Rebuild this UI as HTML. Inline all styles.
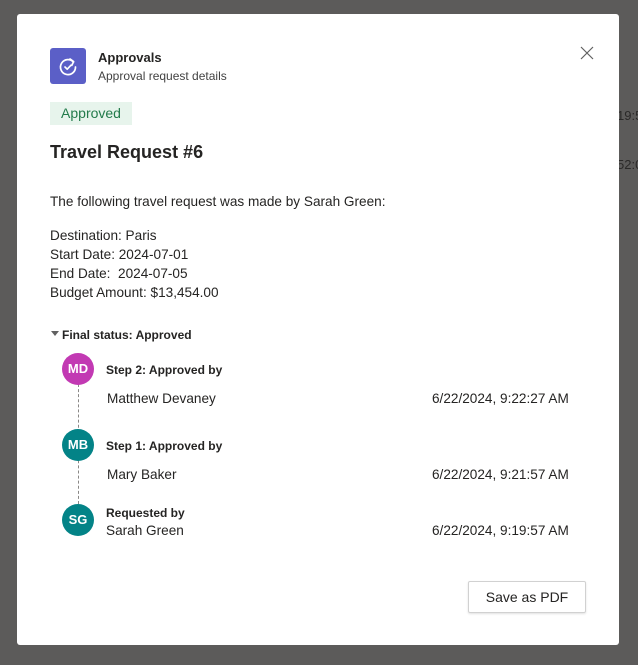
<!DOCTYPE html>
<html><head><meta charset="utf-8"><style>
body{margin:0;width:638px;height:665px;background:#5c5b5a;font-family:"Liberation Sans",sans-serif;position:relative;overflow:hidden;color:#252423}
.bgt{position:absolute;left:617px;font-size:13px;color:#2a2928}
.dlg{position:absolute;left:17px;top:14px;width:602px;height:631px;background:#fff;border-radius:3px}
.abs{position:absolute}
.av{position:absolute;left:45px;width:32px;height:32px;border-radius:50%;color:#fff;font-weight:bold;font-size:13px;text-align:center;line-height:32px}
.s{font-size:12px;font-weight:bold}
.n{font-size:13.6px}
.d{font-size:13.6px;left:415px}
</style></head><body>
<div class="bgt" style="top:108px">19:5</div>
<div class="bgt" style="top:157px">52:0</div>
<div class="dlg">
 <div class="abs" style="left:33px;top:34px;width:36px;height:36px;background:#5b5fc7;border-radius:3px">
  <svg width="36" height="36" viewBox="0 0 36 36"><path d="M23.5 14 A7.5 7.5 0 1 0 25.5 19" fill="none" stroke="#fff" stroke-width="1.7" stroke-linecap="round"/><path d="M20 11 L23.6 13.6 L21.8 17.4" fill="none" stroke="#fff" stroke-width="1.7" stroke-linecap="round" stroke-linejoin="round"/><path d="M15 19 L17.2 21.2 L21 17.2" fill="none" stroke="#fff" stroke-width="1.7" stroke-linecap="round" stroke-linejoin="round"/></svg>
 </div>
 <div class="abs" style="left:81px;top:36px;font-size:13px;font-weight:bold">Approvals</div>
 <div class="abs" style="left:81px;top:55px;font-size:12px;color:#424242">Approval request details</div>
 <svg class="abs" style="left:563px;top:32px" width="14" height="14"><path d="M1 1L13 13M13 1L1 13" stroke="#616161" stroke-width="1.2"/></svg>
 <div class="abs" style="left:33px;top:88px;width:82px;height:23px;background:#e7f4ec;color:#237b4b;font-size:14px;line-height:23px;text-align:center">Approved</div>
 <div class="abs" style="left:33px;top:128px;font-size:18px;font-weight:bold">Travel Request #6</div>
 <div class="abs" style="left:33px;top:180px;font-size:13.6px">The following travel request was made by Sarah Green:</div>
 <div class="abs" style="left:33px;top:212px;font-size:13.6px;line-height:19px">Destination: Paris<br>Start Date: 2024-07-01<br>End Date:&nbsp; 2024-07-05<br>Budget Amount: $13,454.00</div>
 <svg class="abs" style="left:34px;top:317px" width="8" height="6"><path d="M0 0H8L4 5Z" fill="#616161"/></svg>
 <div class="abs s" style="left:45px;top:314px">Final status: Approved</div>
 <div class="abs" style="left:61px;top:370px;height:120px;border-left:1px dashed #8a8886"></div>
 <div class="av" style="top:339px;background:#c239b3">MD</div>
 <div class="abs s" style="left:89px;top:349px">Step 2: Approved by</div>
 <div class="abs n" style="left:90px;top:377px">Matthew Devaney</div>
 <div class="abs d" style="top:377px">6/22/2024, 9:22:27 AM</div>
 <div class="av" style="top:415px;background:#038387">MB</div>
 <div class="abs s" style="left:89px;top:425px">Step 1: Approved by</div>
 <div class="abs n" style="left:90px;top:453px">Mary Baker</div>
 <div class="abs d" style="top:453px">6/22/2024, 9:21:57 AM</div>
 <div class="av" style="top:490px;background:#038387">SG</div>
 <div class="abs s" style="left:89px;top:492px">Requested by</div>
 <div class="abs n" style="left:89px;top:509px">Sarah Green</div>
 <div class="abs d" style="top:509px">6/22/2024, 9:19:57 AM</div>
 <div class="abs" style="left:451px;top:567px;width:116px;height:30px;border:1px solid #d1d1d1;border-radius:2px;box-shadow:0 1px 2px rgba(0,0,0,.12);font-size:14px;text-align:center;line-height:30px">Save as PDF</div>
</div>
</body></html>
